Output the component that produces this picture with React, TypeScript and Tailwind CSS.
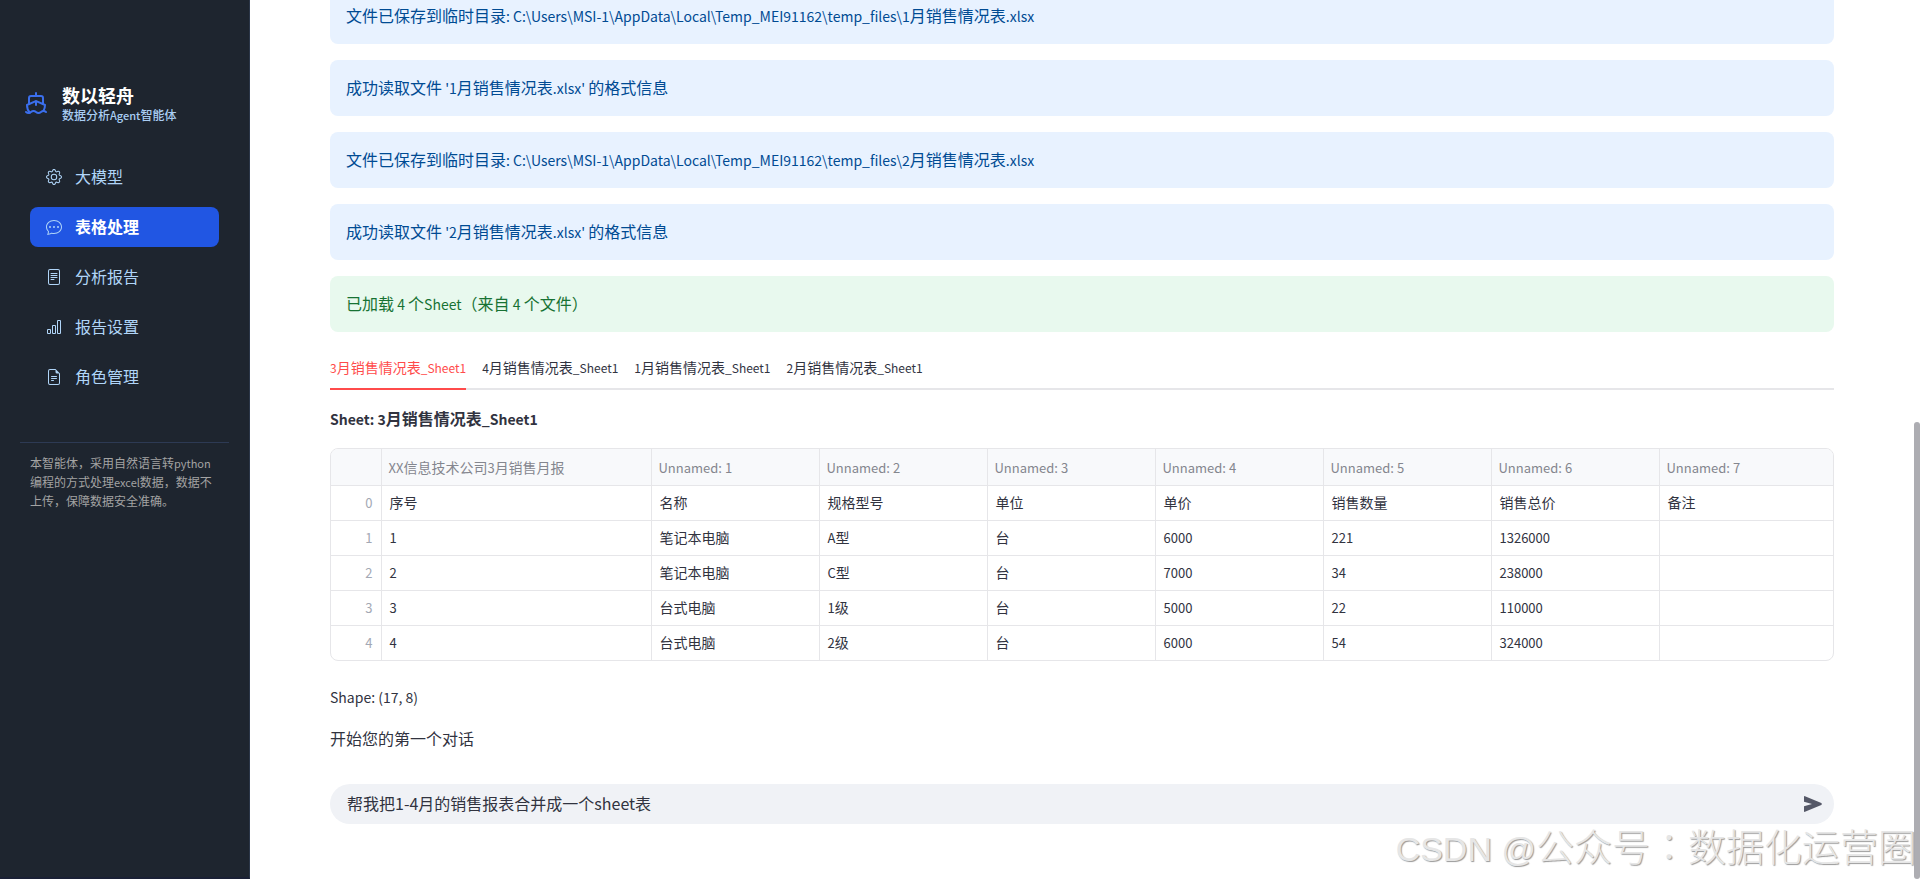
import React, { useState } from 'react';
import type { IconType } from 'react-icons';
import {
  BsBarChart,
  BsChatDots,
  BsFileEarmarkText,
  BsFileText,
  BsGear,
} from 'react-icons/bs';
import { Ship } from 'lucide-react';

const menuItems: { label: string; icon: IconType }[] = [
  { label: '大模型', icon: BsGear },
  { label: '表格处理', icon: BsChatDots },
  { label: '分析报告', icon: BsFileText },
  { label: '报告设置', icon: BsBarChart },
  { label: '角色管理', icon: BsFileEarmarkText },
];

const messages = [
  '文件已保存到临时目录: C:\\Users\\MSI-1\\AppData\\Local\\Temp_MEI91162\\temp_files\\1月销售情况表.xlsx',
  "成功读取文件 '1月销售情况表.xlsx' 的格式信息",
  '文件已保存到临时目录: C:\\Users\\MSI-1\\AppData\\Local\\Temp_MEI91162\\temp_files\\2月销售情况表.xlsx',
  "成功读取文件 '2月销售情况表.xlsx' 的格式信息",
];

const sheets = [
  '3月销售情况表_Sheet1',
  '4月销售情况表_Sheet1',
  '1月销售情况表_Sheet1',
  '2月销售情况表_Sheet1',
];

const columns = [
  'XX信息技术公司3月销售月报',
  'Unnamed: 1',
  'Unnamed: 2',
  'Unnamed: 3',
  'Unnamed: 4',
  'Unnamed: 5',
  'Unnamed: 6',
  'Unnamed: 7',
];

const rows = [
  ['序号', '名称', '规格型号', '单位', '单价', '销售数量', '销售总价', '备注'],
  ['1', '笔记本电脑', 'A型', '台', '6000', '221', '1326000', ''],
  ['2', '笔记本电脑', 'C型', '台', '7000', '34', '238000', ''],
  ['3', '台式电脑', '1级', '台', '5000', '22', '110000', ''],
  ['4', '台式电脑', '2级', '台', '6000', '54', '324000', ''],
];

const latinSizes = {
  base: 'text-[14px] leading-none',
  sm: 'text-[13px] leading-none',
  xs: 'text-[12px] leading-none',
  xxs: 'text-[11px] leading-none',
};

// Latin runs are set slightly smaller than the Chinese characters
const Mixed: React.FC<{ text: string; size?: keyof typeof latinSizes }> = ({
  text,
  size = 'base',
}) => (
  <>
    {text.split(/([\x20-\x7e]+)/).map((part, i) =>
      i % 2 === 1 ? (
        <span key={i} className={latinSizes[size]}>
          {part}
        </span>
      ) : (
        part
      ),
    )}
  </>
);

const Sidebar: React.FC = () => {
  const [active, setActive] = useState('表格处理');

  return (
    <aside className="w-[250px] shrink-0 bg-[#1e252f] border-r border-[#2b3648] border-b-2 border-b-[#1a2035]">
      <div className="flex items-center gap-3.5 pt-[83px] pl-6">
        <Ship className="w-6 h-6 text-[#3b6fed]" />
        <div>
          <h1 className="text-[18px] leading-6 font-bold text-white">
            数以轻舟
          </h1>
          <p className="text-[12px] leading-4 font-medium text-[#a9cdf3]">
            <Mixed text="数据分析Agent智能体" size="xxs" />
          </p>
        </div>
      </div>

      <nav className="mt-[34px] px-[30px] flex flex-col gap-2.5">
        {menuItems.map(({ label, icon: Icon }) => (
          <button
            key={label}
            onClick={() => setActive(label)}
            className={`h-10 px-4 flex items-center gap-[13px] rounded-lg text-[16px] leading-6 ${
              active === label
                ? 'bg-[#2156e3] text-white font-bold'
                : 'text-[#b0d5f8]'
            }`}
          >
            <Icon className="w-4 h-4 text-[#b0d5f8]" />
            <span className="pb-0.5">{label}</span>
          </button>
        ))}
      </nav>

      <div className="mt-[45px] mx-5 border-t border-[#2d3a54] pl-2.5 pr-2 pt-2.5">
        <p className="text-[12px] leading-[19px] text-[#a3a3a3]">
          <Mixed
            text="本智能体，采用自然语言转python编程的方式处理excel数据，数据不上传，保障数据安全准确。"
            size="xxs"
          />
        </p>
      </div>
    </aside>
  );
};

const DataTable: React.FC = () => (
  <div className="mb-[7px] rounded-lg border border-[#e6e6e9] overflow-hidden">
    <table className="w-full table-fixed border-collapse text-[14px] leading-5 text-[#31333f]">
      <thead>
        <tr className="h-9 bg-[#f8f9fb] text-[#84868e] text-left">
          <th className="w-[50px] border-b border-[#e6e6e9]"></th>
          {columns.map((name, i) => (
            <th
              key={name}
              className={`px-[7px] font-normal border-l border-b border-[#e6e6e9] ${
                i === 0
                  ? 'w-[270px]'
                  : i === columns.length - 1
                    ? ''
                    : 'w-[168px]'
              }`}
            >
              <Mixed text={name} size="sm" />
            </th>
          ))}
        </tr>
      </thead>
      <tbody>
        {rows.map((row, r) => (
          <tr
            key={r}
            className="h-[35px] border-b border-[#e6e6e9] last:border-b-0"
          >
            <td className="px-2 pb-0.5 text-right text-[#a3a8b4]">
              <Mixed text={String(r)} size="sm" />
            </td>
            {row.map((cell, c) => (
              <td key={c} className="px-2 pb-0.5 border-l border-[#e6e6e9]">
                <Mixed text={cell} size="sm" />
              </td>
            ))}
          </tr>
        ))}
      </tbody>
    </table>
  </div>
);

const App: React.FC = () => {
  const [sheet, setSheet] = useState(sheets[0]);
  const [prompt, setPrompt] = useState(
    '帮我把1-4月的销售报表合并成一个sheet表',
  );

  return (
    <div className="relative flex min-h-screen overflow-hidden bg-white text-[16px] text-[#31333f] font-['Noto_Sans_CJK_SC',sans-serif]">
      <Sidebar />

      <main className="flex-1 min-w-0 px-20 flex flex-col gap-4">
        <div className="-mt-3 flex flex-col gap-4 leading-6">
          {messages.map((message) => (
            <div
              key={message}
              className="px-4 pt-[15px] pb-[17px] rounded-lg bg-[#e8f2ff] text-[#004b93]"
            >
              <Mixed text={message} />
            </div>
          ))}
          <div className="px-4 pt-[15px] pb-[17px] rounded-lg bg-[#e8f9ee] text-[#177233]">
            <Mixed text="已加载 4 个Sheet（来自 4 个文件）" />
          </div>
        </div>

        <div
          role="tablist"
          className="flex gap-4 border-b-2 border-[#e6e6e9] text-[14px] leading-5"
        >
          {sheets.map((name) => (
            <button
              key={name}
              role="tab"
              aria-selected={sheet === name}
              onClick={() => setSheet(name)}
              className={`h-[42px] pb-0.5 -mb-0.5 border-b-2 ${
                sheet === name
                  ? 'border-[#ff4b4b] text-[#ff4b4b]'
                  : 'border-transparent'
              }`}
            >
              <Mixed text={name} size="xs" />
            </button>
          ))}
        </div>

        <p className="leading-6 pb-0.5 font-bold">
          <Mixed text={`Sheet: ${sheet}`} />
        </p>
        <DataTable />
        <p className="leading-6 pb-0.5">
          <Mixed text="Shape: (17, 8)" />
        </p>
        <p className="leading-6 pb-0.5">开始您的第一个对话</p>

        <form
          onSubmit={(e) => e.preventDefault()}
          className="mt-4 h-10 flex items-center rounded-full bg-[#f0f2f6] pl-[17px] pr-3"
        >
          <input
            aria-label="输入对话内容"
            value={prompt}
            onChange={(e) => setPrompt(e.target.value)}
            className="flex-1 min-w-0 pb-0.5 bg-transparent outline-none leading-6"
          />
          <button type="submit" aria-label="发送" className="text-[#555867]">
            <svg viewBox="0 0 18 16" className="w-[18px] h-4" fill="currentColor">
              <path d="M0 0.8 Q0 -0.2 1 0.2 L17.300 7.100 Q18.300 8 17.300 8.900 L1 15.800 Q0 16.200 0 15.200 V10.300 L8 8 L0 5.700 Z" />
            </svg>
          </button>
        </form>
      </main>

      {/* Scrollbar */}
      <div className="w-1.5 shrink-0 flex flex-col justify-end">
        <div className="h-[52%] rounded-full bg-[#adadb2]"></div>
      </div>

      <div className="absolute right-1 bottom-1.5 text-[38px] leading-[56px] font-light whitespace-nowrap text-[#e6e6e6] [text-shadow:1px_1px_1px_#999] font-['Noto_Sans_CJK_SC',sans-serif] pointer-events-none">
        <span className="text-[34px] leading-none font-['Liberation_Sans',sans-serif]">
          CSDN @
        </span>
        公众号
        <span className="font-['Noto_Sans_CJK_TC',sans-serif]" lang="zh-TW">
          ：
        </span>
        数据化运营圈
      </div>
    </div>
  );
};

export default App;
